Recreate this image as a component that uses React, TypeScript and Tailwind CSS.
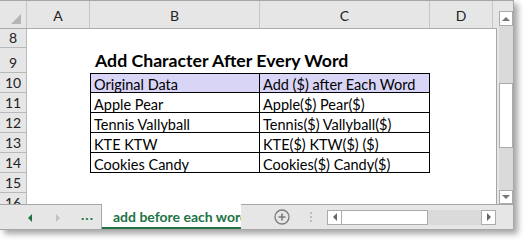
import * as React from 'react'

const font = { fontFamily: 'Lato, "Liberation Sans", sans-serif' }

const rows = [
  { n: '10', a: 'Original Data', b: 'Add ($) after Each Word', head: true },
  { n: '11', a: 'Apple Pear', b: 'Apple($) Pear($)' },
  { n: '12', a: 'Tennis Vallyball', b: 'Tennis($) Vallyball($)' },
  { n: '13', a: 'KTE KTW', b: 'KTE($) KTW($) ($)' },
  { n: '14', a: 'Cookies Candy', b: 'Cookies($) Candy($)' },
]

function RowHead({ n }: { n: string }) {
  return (
    <div className="w-[27px] shrink-0 h-full bg-[#e6e6e6] border-r border-b border-[#b9b9b9] flex items-end justify-center pb-[2px] text-[14px] leading-none text-[#222]">
      {n}
    </div>
  )
}

function Tri({ dir, className }: { dir: 'up' | 'down' | 'left' | 'right'; className?: string }) {
  const pts = {
    up: '0,4 4,0 8,4',
    down: '0,0 8,0 4,4',
    left: '4,0 4,8 0,4',
    right: '0,0 0,8 4,4',
  }[dir]
  const w = dir === 'up' || dir === 'down' ? 8 : 4
  const h = dir === 'up' || dir === 'down' ? 4 : 8
  return (
    <svg width={w} height={h} viewBox={`0 0 ${w} ${h}`} className={className}>
      <polygon points={pts} fill="currentColor" />
    </svg>
  )
}

export default function App() {
  return (
    <div className="w-[526px] h-[242px] bg-white" style={font}>
      <div className="w-[514px] h-[230px] border-t border-r border-b border-[#a6a6a6] bg-[#e6e6e6] flex flex-col shadow-[4px_4px_6px_rgba(0,0,0,0.35)]">
        <div className="flex h-[203px] shrink-0">
          {/* sheet grid */}
          <div className="w-[497px] flex flex-col">
            {/* column headers */}
            <div className="h-[28px] shrink-0 flex border-b border-[#ababab] text-[14px] leading-none text-[#222]">
              <div className="w-[27px] shrink-0 border-r border-[#c6c6c6] flex items-end justify-end pr-[5px] pb-[4px]">
                <svg width="10" height="10" viewBox="0 0 10 10">
                  <polygon points="0,10 10,10 10,0" fill="#b5b5b5" />
                </svg>
              </div>
              <div className="w-[63px] shrink-0 border-r border-[#c6c6c6] flex items-end justify-center pb-[5px]">A</div>
              <div className="w-[170px] shrink-0 border-r border-[#c6c6c6] flex items-end justify-center pb-[5px]">B</div>
              <div className="w-[170px] shrink-0 border-r border-[#c6c6c6] flex items-end justify-center pb-[5px]">C</div>
              <div className="w-[63px] shrink-0 border-r border-[#c6c6c6] flex items-end justify-center pb-[5px]">D</div>
            </div>
            {/* body */}
            <div className="flex-1 min-h-0 overflow-hidden border-r border-[#a6a6a6] bg-white flex flex-col">
              <div className="h-[19px] shrink-0 flex">
                <RowHead n="8" />
              </div>
              <div className="h-[25px] shrink-0 flex">
                <RowHead n="9" />
                <div className="w-[63px] shrink-0" />
                <div className="flex items-end pl-[5px] pb-[3px] text-[17.7px] font-bold leading-none text-black whitespace-nowrap">
                  Add Character After Every Word
                </div>
              </div>
              {rows.map((r) => (
                <div key={r.n} className="h-[20px] shrink-0 flex">
                  <RowHead n={r.n} />
                  <div className="w-[63px] shrink-0" />
                  <div
                    className={`w-[170px] shrink-0 border-l border-r border-b border-black flex items-end pl-[3px] text-[14.5px] leading-none text-black whitespace-nowrap ${
                      r.head ? 'border-t bg-[#d9d5f7]' : ''
                    }`}
                  >
                    {r.a}
                  </div>
                  <div
                    className={`w-[170px] shrink-0 border-r border-b border-black flex items-end pl-[3px] text-[14.5px] leading-none text-black whitespace-nowrap ${
                      r.head ? 'border-t bg-[#d9d5f7]' : ''
                    }`}
                  >
                    {r.b}
                  </div>
                </div>
              ))}
              <div className="h-[20px] shrink-0 flex">
                <RowHead n="15" />
              </div>
              <div className="h-[20px] shrink-0 flex">
                <RowHead n="16" />
              </div>
            </div>
          </div>
          <div className="w-[2px] shrink-0" />
          {/* vertical scrollbar */}
          <div className="w-[14px] shrink-0 flex flex-col pt-[10px]">
            <div className="h-[15px] shrink-0 bg-white border border-[#ababab] flex items-center justify-center text-[#777]">
              <Tri dir="up" />
            </div>
            <div className="flex-1 bg-[#dadada] flex flex-col pt-[57px]">
              <div className="h-[65px] bg-white border-x border-b border-t border-[#ababab]" />
            </div>
            <div className="h-[14px] shrink-0 bg-white border border-[#ababab] flex items-center justify-center text-[#777]">
              <Tri dir="down" />
            </div>
          </div>
        </div>
        {/* sheet tabs */}
        <div className="h-[25px] shrink-0 border-t border-[#a6a6a6] flex items-stretch">
          <div className="w-[102px] shrink-0 border-r border-[#a6a6a6] flex items-center relative">
            <Tri dir="left" className="absolute left-[28px] top-[9px] text-[#217346]" />
            <Tri dir="right" className="absolute left-[56px] top-[9px] text-[#c2c2c2]" />
            <span className="absolute left-[81px] top-[3px] text-[14px] font-bold text-[#217346] leading-none tracking-[1px]">...</span>
          </div>
          <div className="w-[139px] shrink-0 -mt-px bg-white border-b-[2px] border-[#217346] overflow-hidden flex items-center pl-[11px]">
            <span className="text-[14px] font-bold text-[#217346] whitespace-nowrap leading-none mt-[2px]">add before each word</span>
          </div>
          <div className="flex-1 flex items-center">
            <svg width="16" height="16" viewBox="0 0 16 16" className="ml-[33px]">
              <circle cx="8" cy="8" r="7" fill="none" stroke="#7b7b7b" strokeWidth="1.3" />
              <path d="M8 4.5v7M4.5 8h7" stroke="#7b7b7b" strokeWidth="1.6" />
            </svg>
            <div className="ml-[20px] flex flex-col gap-[2px]">
              <div className="w-[2px] h-[2px] bg-[#bdbdbd]" />
              <div className="w-[2px] h-[2px] bg-[#bdbdbd]" />
              <div className="w-[2px] h-[2px] bg-[#bdbdbd]" />
            </div>
            <div className="ml-[15px] h-[15px] w-[169px] flex bg-[#dadada]">
              <div className="w-[15px] shrink-0 bg-white border border-[#ababab] flex items-center justify-center text-[#666]">
                <Tri dir="left" />
              </div>
              <div className="w-[86px] shrink-0 bg-white border-y border-r border-[#ababab]" />
              <div className="flex-1" />
              <div className="w-[15px] shrink-0 bg-white border border-[#ababab] flex items-center justify-center text-[#666]">
                <Tri dir="right" />
              </div>
            </div>
          </div>
        </div>
      </div>
    </div>
  )
}
